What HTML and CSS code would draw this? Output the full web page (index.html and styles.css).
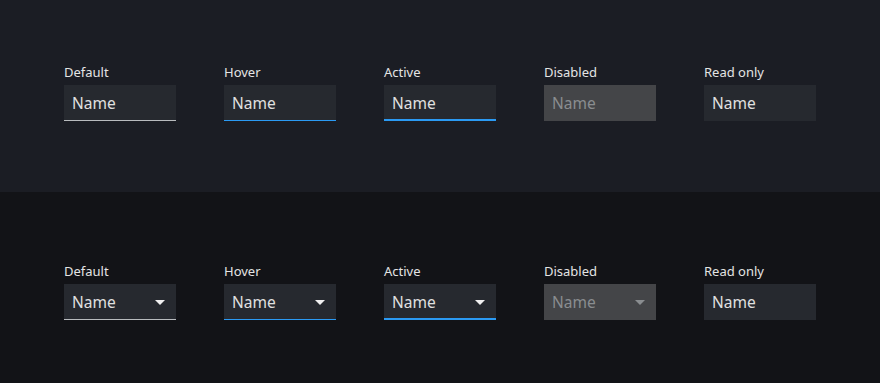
FILE: index.html
```html
<!DOCTYPE html>
<html lang="en">
<head>
    <meta charset="UTF-8">
    <title>Form controls</title>
    <link rel="stylesheet" href="styles.css">
</head>
<body>
    <section class="panel panel-inputs">
        <div class="row">
            <div class="field">
                <label>Default</label>
                <div class="control">Name</div>
            </div>
            <div class="field">
                <label>Hover</label>
                <div class="control hover">Name</div>
            </div>
            <div class="field">
                <label>Active</label>
                <div class="control active">Name</div>
            </div>
            <div class="field">
                <label>Disabled</label>
                <div class="control disabled">Name</div>
            </div>
            <div class="field">
                <label>Read only</label>
                <div class="control readonly">Name</div>
            </div>
        </div>
    </section>

    <section class="panel panel-selects">
        <div class="row">
            <div class="field">
                <label>Default</label>
                <div class="control select">Name <span class="caret"></span></div>
            </div>
            <div class="field">
                <label>Hover</label>
                <div class="control select hover">Name <span class="caret"></span></div>
            </div>
            <div class="field">
                <label>Active</label>
                <div class="control select active">Name <span class="caret"></span></div>
            </div>
            <div class="field">
                <label>Disabled</label>
                <div class="control select disabled">Name <span class="caret"></span></div>
            </div>
            <div class="field">
                <label>Read only</label>
                <div class="control readonly">Name</div>
            </div>
        </div>
    </section>
</body>
</html>
```

FILE: styles.css
```css
body {
    margin: 0;
    font-family: "Noto Sans", "Open Sans", sans-serif;
    color: #e0e0e0;
    background-color: #121317;
}
.panel {
    box-sizing: border-box;
    padding-left: 64px;
}
.panel-inputs {
    height: 192px;
    padding-top: 63px;
    background-color: #1b1d24;
}
.panel-selects {
    height: 191px;
    padding-top: 70px;
    background-color: #121317;
}
.row {
    display: flex;
    gap: 48px;
}
.field {
    width: 112px;
}
label {
    display: block;
    font-size: 13px;
    line-height: 18px;
    margin-bottom: 4px;
    color: #e4e4e4;
}
.control {
    box-sizing: border-box;
    display: flex;
    align-items: center;
    height: 36px;
    padding: 0 8px;
    font-size: 15.5px;
    background-color: #26292f;
    box-shadow: inset 0 -1px 0 #b8bbbe;
}
.control.hover {
    box-shadow: inset 0 -1px 0 #2b9af3;
}
.control.active {
    box-shadow: inset 0 -2px 0 #2b9af3;
}
.control.disabled {
    background-color: #444548;
    box-shadow: none;
    color: #8a8d90;
}
.control.readonly {
    box-shadow: none;
}
.select {
    justify-content: space-between;
    padding-right: 11px;
}
.caret {
    width: 0;
    height: 0;
    border-left: 5px solid transparent;
    border-right: 5px solid transparent;
    border-top: 5px solid #f0f0f0;
}
.disabled .caret {
    border-top-color: #8a8d90;
}
```
